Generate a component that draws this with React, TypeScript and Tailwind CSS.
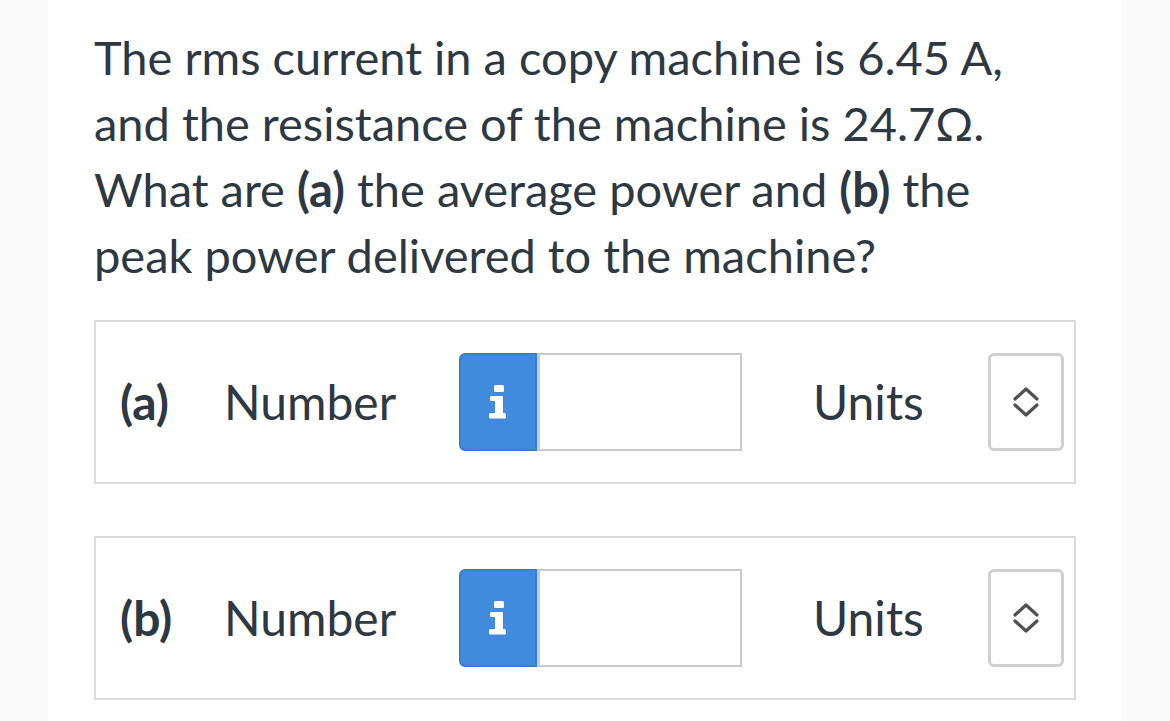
import React from "react";

function InfoGlyph() {
  return (
    <svg width="18" height="34" viewBox="0 0 18 34" fill="#ffffff">
      <rect x="5" y="0" width="10" height="7" rx="1.5" />
      <rect x="1" y="11" width="13" height="5" rx="1.5" />
      <rect x="6" y="11" width="8" height="22" rx="1" />
      <rect x="0" y="28" width="17" height="5.5" rx="1.5" />
    </svg>
  );
}

function UpDown() {
  return (
    <svg width="28" height="32" viewBox="0 0 28 32" fill="none" stroke="#505050" strokeWidth="3.2" strokeLinecap="round" strokeLinejoin="round">
      <path d="M3 13 L14 3 L25 13" />
      <path d="M3 19 L14 29 L25 19" />
    </svg>
  );
}

function AnswerRow({ part }: { part: string }) {
  return (
    <div className="flex items-center border-2 border-[#dcdcdc] bg-white pl-[24px] pr-[10px] py-[31px]">
      <span className="w-[104px] font-bold">{part}</span>
      <span className="w-[235px]">Number</span>
      <div className="flex h-[98px] w-[78px] items-center justify-center rounded-l-[6px] border-2 border-[#3a7ec9] bg-[#408bdb]">
        <InfoGlyph />
      </div>
      <div className="h-[98px] w-[205px] border-2 border-l-[3px] border-[#cbcbcb] border-l-[#c3ccd6] bg-white"></div>
      <span className="ml-[71px] w-[175px]">Units</span>
      <div className="flex h-[98px] w-[76px] items-center justify-center rounded-[6px] border-[3px] border-[#d0d0d0] bg-white">
        <UpDown />
      </div>
    </div>
  );
}

export default function App() {
  return (
    <div className="flex min-h-[721px] justify-center bg-[#f9f9f9]" style={{ fontFamily: "Lato, 'Open Sans', sans-serif" }}>
      <div className="w-[1074px] bg-white pl-[46px] pr-[46px] pt-[24px] text-[#2e3842]">
        <p className="text-[47px] leading-[66px]">
          The rms current in a copy machine is 6.45 A,<br />
          and the resistance of the machine is 24.7Ω.<br />
          What are <b>(a)</b> the average power and <b>(b)</b> the<br />
          peak power delivered to the machine?
        </p>
        <div className="mt-[32px] flex flex-col gap-[52px] text-[48px] leading-none">
          <AnswerRow part="(a)" />
          <AnswerRow part="(b)" />
        </div>
      </div>
    </div>
  );
}
